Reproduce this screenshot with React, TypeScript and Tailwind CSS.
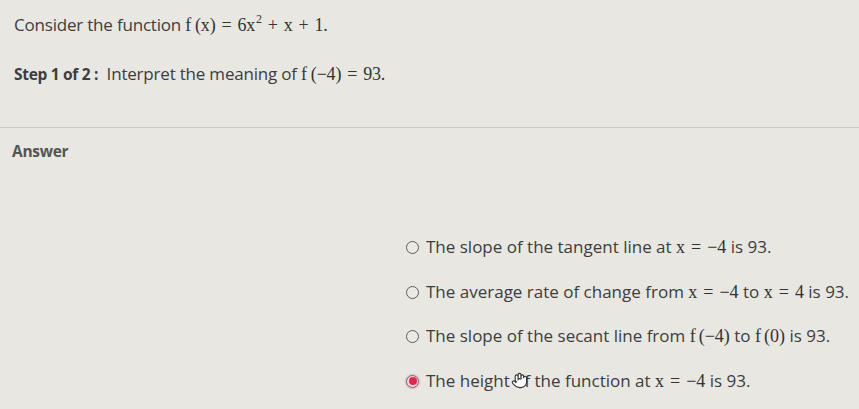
import { Hand } from "lucide-react";
import type { ReactNode } from "react";

const M = ({ children }: { children: ReactNode }) => (
  <span className="font-['Liberation_Serif',serif] text-[18px] text-[#333]">{children}</span>
);

// operator with math spacing
const Op = ({ children }: { children: ReactNode }) => <span className="mx-[6px]">{children}</span>;

function Radio({ selected = false }: { selected?: boolean }) {
  if (selected) {
    return (
      <span className="flex h-[13px] w-[13px] shrink-0 items-center justify-center rounded-full border-[1.5px] border-[#6b6b6b] bg-[#f3d6dc] shadow-[0_0_0_1.5px_#f0c5cf]">
        <span className="h-[8px] w-[8px] rounded-full bg-[#e0284f]" />
      </span>
    );
  }
  return <span className="h-[13px] w-[13px] shrink-0 rounded-full border-[1.5px] border-[#5a5a5a] bg-[#eceae6]" />;
}

function Option({ selected, children }: { selected?: boolean; children: ReactNode }) {
  return (
    <div className="flex h-[44.6px] items-center gap-[7px]">
      <Radio selected={selected} />
      <span className="whitespace-nowrap">{children}</span>
    </div>
  );
}

export default function App() {
  return (
    <div className="h-[409px] w-[859px] overflow-hidden bg-[#e8e7e2] font-['Open_Sans',sans-serif] text-[17px] text-[#3d3d3d]">
      <div className="px-[14px] pt-[12px]">
        <p className="h-[26px] leading-[26px] tracking-[-0.2px]">
          Consider the function{" "}
          <M>
            f<span className="ml-[4px]">(x)</span>
            <Op>=</Op>6x<sup className="top-[-0.7em] ml-[1px] text-[12px]">2</sup>
            <Op>+</Op>x<Op>+</Op>1.
          </M>
        </p>
        <p className="mt-[23px] h-[26px] leading-[26px] tracking-[-0.2px]">
          <span className="text-[15.5px] font-bold tracking-[-0.3px]">Step 1 of 2 :</span>&nbsp; Interpret the meaning of{" "}
          <M>
            f<span className="ml-[4px]">(−4)</span>
            <Op>=</Op>93.
          </M>
        </p>
      </div>

      <div className="mt-[40px] h-px bg-[#c9c8c3]" />

      <div className="px-[12px] pt-[12px]">
        <p className="text-[15.5px] font-bold tracking-[-0.3px] text-[#555]">Answer</p>
      </div>

      <div className="ml-[406px] mt-[62px] flex flex-col text-[17px]">
        <Option>
          The slope of the tangent line at{" "}
          <M>
            x<Op>=</Op>−4
          </M>{" "}
          is 93.
        </Option>
        <Option>
          The average rate of change from{" "}
          <M>
            x<Op>=</Op>−4
          </M>{" "}
          to{" "}
          <M>
            x<Op>=</Op>4
          </M>{" "}
          is 93.
        </Option>
        <Option>
          The slope of the secant line from{" "}
          <M>
            f<span className="ml-[3px]">(−4)</span>
          </M>{" "}
          to{" "}
          <M>
            f<span className="ml-[3px]">(0)</span>
          </M>{" "}
          is 93.
        </Option>
        <Option selected>
          The height{" "}
          <span className="relative">
            of
            <Hand className="absolute left-[-3px] top-[3px] h-[17px] w-[17px] fill-white text-[#333]" strokeWidth={1.6} />
          </span>{" "}
          the function at{" "}
          <M>
            x<Op>=</Op>−4
          </M>{" "}
          is 93.
        </Option>
      </div>
    </div>
  );
}
